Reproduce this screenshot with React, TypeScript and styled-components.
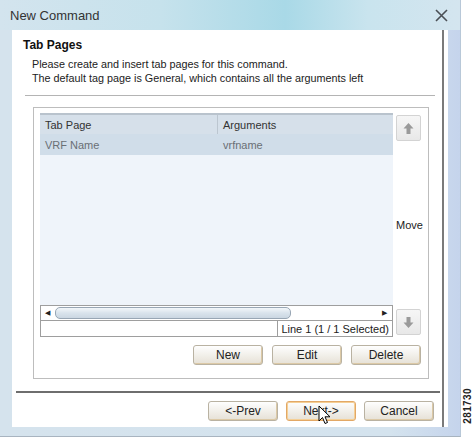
import React from "react";
import styled, { createGlobalStyle } from "styled-components";

const GlobalStyle = createGlobalStyle`
  html, body {
    margin: 0;
    padding: 0;
    background: #ffffff;
  }
  body {
    font-family: Tahoma, "DejaVu Sans", "Liberation Sans", sans-serif;
  }
`;

const Page = styled.div`
  width: 474px;
  height: 440px;
  display: flex;
  align-items: flex-start;
  overflow: hidden;
`;

const Window = styled.div`
  width: 461px;
  height: 437px;
  display: flex;
  flex-direction: column;
  background: linear-gradient(180deg, #cfe2ec 0%, #d6e4ee 60%, #c9e6ee 100%);
  border-right: 1px solid #b8c8d8;
  border-bottom: 1px solid #a8b4c0;
  box-sizing: border-box;
`;

const TitleBar = styled.div`
  height: 30px;
  display: flex;
  align-items: center;
  justify-content: space-between;
  padding: 0 12px 0 10px;
  background: linear-gradient(
    90deg,
    #d3e4ee 0%,
    #c6e2ec 35%,
    #a9d9e7 62%,
    #c9e4ee 80%,
    #d4e5ef 100%
  );
`;

const Title = styled.span`
  font-family: "Liberation Sans", Arial, sans-serif;
  font-size: 13px;
  color: #333;
`;

const Close = styled.svg`
  display: block;
`;

const Frame = styled.div`
  flex: 1;
  display: flex;
  padding: 0 12px 9px 12px;
  background: linear-gradient(90deg, #d5e3ed 0%, #d4e3ee 85%, #c5d4ec 100%);
`;

const Content = styled.div`
  flex: 1;
  background: #fff;
  padding-right: 4px;
  display: flex;
`;

const Inner = styled.div`
  flex: 1;
  border-right: 2px solid #7a7a7a;
  display: flex;
  flex-direction: column;
  font-family: "Liberation Sans", Arial, sans-serif;
  font-size: 11px;
  color: #222;
`;

const Heading = styled.div`
  font-weight: bold;
  font-size: 12px;
  margin: 8px 0 0 11px;
  color: #111;
`;

const Desc = styled.div`
  margin: 5px 0 10px 20px;
  line-height: 14px;
  color: #222;
  font-size: 10.8px;
`;

const Rule = styled.div<{ $dark?: boolean; $left: number; $right: number }>`
  height: ${(p) => (p.$dark ? 2 : 1)}px;
  background: ${(p) => (p.$dark ? "#6e6e6e" : "#b4b4b4")};
  margin-left: ${(p) => p.$left}px;
  margin-right: ${(p) => p.$right}px;
`;

const Group = styled.div`
  margin: 11px 13px 12px 21px;
  height: 272px;
  box-sizing: border-box;
  border: 1px solid #bdbdbd;
  padding: 5px 7px 0 6px;
  display: flex;
  flex-direction: column;
`;

const GroupTop = styled.div`
  display: flex;
  gap: 3px;
`;

const List = styled.div`
  width: 353px;
  height: 224px;
  display: flex;
  flex-direction: column;
`;

const Grid = styled.div`
  flex: 1;
  background: #eff4fa;
  display: flex;
  flex-direction: column;
`;

const Row = styled.div<{ $head?: boolean }>`
  height: ${(p) => (p.$head ? 19 : 21)}px;
  display: grid;
  grid-template-columns: 178px 1fr;
  background: ${(p) => (p.$head ? "#d6e0ea" : "#d0dde9")};
  border-top: ${(p) => (p.$head ? "2px solid #b9c3cd" : "none")};
  color: ${(p) => (p.$head ? "#333" : "#6a6f75")};
`;

const Cell = styled.div<{ $divider?: boolean }>`
  display: flex;
  align-items: center;
  padding-left: 5px;
  border-right: ${(p) => (p.$divider ? "1px solid #bcc6d0" : "none")};
`;

const HScroll = styled.div`
  height: 16px;
  box-sizing: border-box;
  border: 1px solid #9e9e9e;
  background: #fff;
  display: flex;
  align-items: center;
  padding: 0 4px;
  gap: 4px;
`;

const Arrow = styled.span`
  font-size: 7px;
  color: #222;
  width: 6px;
  font-family: "DejaVu Sans", sans-serif;
`;

const Track = styled.div`
  flex: 1;
  height: 12px;
  display: flex;
`;

const Thumb = styled.div`
  width: 236px;
  height: 12px;
  box-sizing: border-box;
  border: 1px solid #98a6b4;
  border-radius: 5px;
  background: linear-gradient(180deg, #f3f7fa 0%, #d9e3ec 50%, #cbd7e2 100%);
`;

const Status = styled.div`
  height: 16px;
  display: flex;
  justify-content: flex-end;
  box-sizing: border-box;
  border: 1px solid #9e9e9e;
  border-top: none;
  background: #fff;
`;

const StatusText = styled.div`
  border-left: 1px solid #9e9e9e;
  padding: 0 3px 0 3px;
  display: flex;
  align-items: center;
  font-size: 11px;
  color: #222;
`;

const Side = styled.div`
  width: 25px;
  display: flex;
  flex-direction: column;
  align-items: flex-start;
  justify-content: space-between;
  padding: 2px 0;
`;

const MoveBtn = styled.div`
  width: 25px;
  height: 26px;
  box-sizing: border-box;
  border: 1px solid #d3d3d3;
  border-radius: 2px;
  background: linear-gradient(180deg, #f6f6f6 0%, #e8e8e8 100%);
  display: flex;
  align-items: center;
  justify-content: center;
`;

const MoveLabel = styled.div`
  font-size: 11px;
  color: #222;
`;

const ButtonRow = styled.div<{ $gap: number }>`
  display: flex;
  justify-content: flex-end;
  gap: ${(p) => p.$gap}px;
`;

const GroupButtons = styled(ButtonRow)`
  margin-top: 8px;
`;

const Button = styled.div<{ $focus?: boolean }>`
  position: relative;
  width: 70px;
  height: 20px;
  box-sizing: border-box;
  border: 1px solid ${(p) => (p.$focus ? "#e2a866" : "#b9b2a2")};
  border-radius: 3px;
  background: linear-gradient(180deg, #fefefe 0%, #f3f1ec 45%, #e6e1d6 100%);
  box-shadow: ${(p) =>
    p.$focus ? "inset 0 0 0 1px #f5cf95" : "inset -1px -1px 0 #dcc9a6"};
  display: flex;
  align-items: center;
  justify-content: center;
  font-size: 12px;
  color: #222;
`;

const Footer = styled.div`
  margin: 8px 8px 0 0;
`;

const Cursor = styled.svg`
  position: absolute;
  left: 31px;
  top: 3px;
`;

const Tag = styled.div`
  margin-top: 388px;
  margin-left: 1px;
  writing-mode: vertical-rl;
  transform: rotate(180deg);
  font-family: "Liberation Sans", Arial, sans-serif;
  font-size: 10px;
  line-height: 11px;
  font-weight: bold;
  color: #222;
  letter-spacing: 0.4px;
`;

const UpArrow = () => (
  <svg width="11" height="13" viewBox="0 0 11 13">
    <path d="M5.5 1 L10.5 6.5 L7.5 6.5 L7.5 12 L3.5 12 L3.5 6.5 L0.5 6.5 Z" fill="#9a9a9a" />
  </svg>
);

const DownArrow = () => (
  <svg width="11" height="13" viewBox="0 0 11 13">
    <path d="M5.5 12 L10.5 6.5 L7.5 6.5 L7.5 1 L3.5 1 L3.5 6.5 L0.5 6.5 Z" fill="#9a9a9a" />
  </svg>
);

export default function App() {
  return (
    <Page>
      <GlobalStyle />
      <Window>
        <TitleBar>
          <Title>New Command</Title>
          <Close width="13" height="13" viewBox="0 0 13 13">
            <path d="M1 1 L12 12 M12 1 L1 12" stroke="#4a4f55" strokeWidth="1.6" />
          </Close>
        </TitleBar>
        <Frame>
          <Content>
            <Inner>
              <Heading>Tab Pages</Heading>
              <Desc>
                Please create and insert tab pages for this command.
                <br />
                The default tag page is General, which contains all the arguments left
              </Desc>
              <Rule $left={13} $right={7} />
              <Group>
                <GroupTop>
                  <List>
                    <Grid>
                      <Row $head>
                        <Cell $divider>Tab Page</Cell>
                        <Cell>Arguments</Cell>
                      </Row>
                      <Row>
                        <Cell>VRF Name</Cell>
                        <Cell>vrfname</Cell>
                      </Row>
                    </Grid>
                    <HScroll>
                      <Arrow>◀</Arrow>
                      <Track>
                        <Thumb />
                      </Track>
                      <Arrow>▶</Arrow>
                    </HScroll>
                    <Status>
                      <StatusText>Line 1 (1 / 1 Selected)</StatusText>
                    </Status>
                  </List>
                  <Side>
                    <MoveBtn>
                      <UpArrow />
                    </MoveBtn>
                    <MoveLabel>Move</MoveLabel>
                    <MoveBtn>
                      <DownArrow />
                    </MoveBtn>
                  </Side>
                </GroupTop>
                <GroupButtons $gap={9}>
                  <Button>New</Button>
                  <Button>Edit</Button>
                  <Button>Delete</Button>
                </GroupButtons>
              </Group>
              <Rule $dark $left={4} $right={2} />
              <Footer>
                <ButtonRow $gap={8}>
                  <Button>&lt;-Prev</Button>
                  <Button $focus>
                    Next-&gt;
                    <Cursor width="13" height="21" viewBox="0 0 13 21">
                      <path
                        d="M1 1 L1 16 L4.5 12.5 L7 18.5 L9.5 17.5 L7 11.8 L12 11.8 Z"
                        fill="#fff"
                        stroke="#000"
                        strokeWidth="1"
                        strokeLinejoin="round"
                      />
                    </Cursor>
                  </Button>
                  <Button>Cancel</Button>
                </ButtonRow>
              </Footer>
            </Inner>
          </Content>
        </Frame>
      </Window>
      <Tag>281730</Tag>
    </Page>
  );
}
